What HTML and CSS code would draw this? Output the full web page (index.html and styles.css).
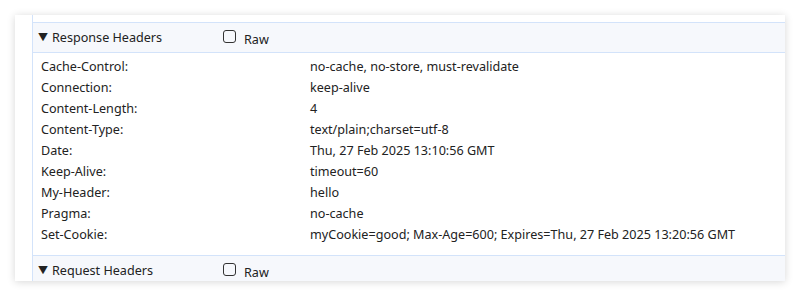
FILE: index.html
```html
<!DOCTYPE html>
<html lang="en">
<head>
    <meta charset="UTF-8">
    <meta name="viewport" content="width=device-width, initial-scale=1.0">
    <title>Response Headers</title>
    <link rel="stylesheet" href="styles.css">
</head>
<body>
    <div class="card">
        <div class="panel">
            <div class="section-head">
                <span class="toggle"><span class="tri">&#9660;</span>Response Headers</span>
                <label class="raw"><span class="box"></span>Raw</label>
            </div>
            <div class="headers">
                <div class="row"><span class="key">Cache-Control:</span><span class="val">no-cache, no-store, must-revalidate</span></div>
                <div class="row"><span class="key">Connection:</span><span class="val">keep-alive</span></div>
                <div class="row"><span class="key">Content-Length:</span><span class="val">4</span></div>
                <div class="row"><span class="key">Content-Type:</span><span class="val">text/plain;charset=utf-8</span></div>
                <div class="row"><span class="key">Date:</span><span class="val">Thu, 27 Feb 2025 13:10:56 GMT</span></div>
                <div class="row"><span class="key">Keep-Alive:</span><span class="val">timeout=60</span></div>
                <div class="row"><span class="key">My-Header:</span><span class="val">hello</span></div>
                <div class="row"><span class="key">Pragma:</span><span class="val">no-cache</span></div>
                <div class="row"><span class="key">Set-Cookie:</span><span class="val">myCookie=good; Max-Age=600; Expires=Thu, 27 Feb 2025 13:20:56 GMT</span></div>
            </div>
            <div class="section-head">
                <span class="toggle"><span class="tri">&#9660;</span>Request Headers</span>
                <label class="raw"><span class="box"></span>Raw</label>
            </div>
        </div>
    </div>
</body>
</html>
```

FILE: styles.css
```css
body {
    margin: 0;
    padding: 15px;
    background: #ffffff;
    font-family: "Noto Sans", "Noto Sans CJK KR", sans-serif;
    font-size: 12.6px;
    color: #222;
}
.card {
    height: 266px;
    background: white;
    overflow: hidden;
    box-shadow: 0 1px 8px rgba(0,0,0,0.16);
}
.panel {
    margin-left: 17px;
    padding-top: 7px;
    border-left: 1px solid #d3e3fa;
    min-height: 100%;
    box-sizing: border-box;
}
.section-head {
    display: flex;
    align-items: center;
    height: 29px;
    background: #f6f8fc;
    border-top: 1px solid #d3e3fa;
    border-bottom: 1px solid #d3e3fa;
    padding-left: 5px;
}
.toggle {
    width: 185px;
}
.tri {
    font-size: 10px;
    margin-right: 4px;
    vertical-align: 1px;
}
.raw {
    display: flex;
    align-items: center;
    padding-top: 3px;
}
.box {
    width: 11px;
    height: 11px;
    border: 1px solid #333;
    border-radius: 3px;
    margin: -5px 8px 0 0;
}
.headers {
    padding: 3px 0 10px 8px;
}
.row {
    display: flex;
    line-height: 21px;
}
.key {
    width: 269px;
}
```
